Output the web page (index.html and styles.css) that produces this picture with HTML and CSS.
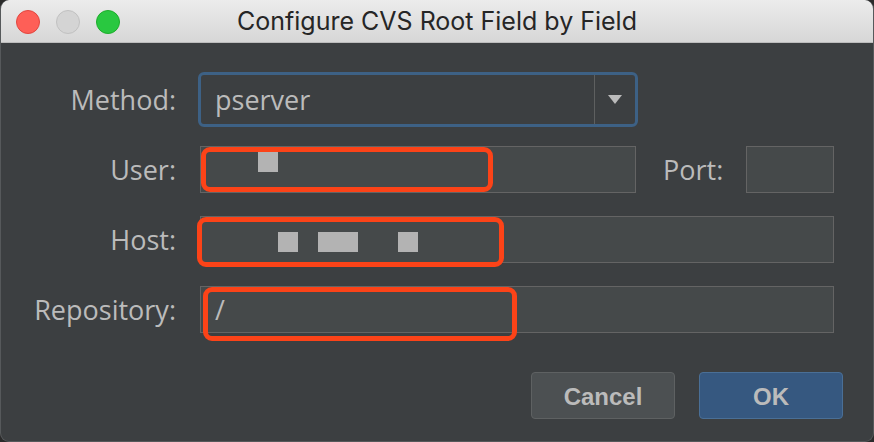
FILE: index.html
```html
<!DOCTYPE html>
<html lang="en">
<head>
<meta charset="utf-8">
<title>Configure CVS Root Field by Field</title>
<link rel="stylesheet" href="styles.css">
</head>
<body>
<div class="window">
  <header class="titlebar">
    <div class="lights">
      <span class="light light-close"></span>
      <span class="light light-min"></span>
      <span class="light light-max"></span>
    </div>
    <div class="title">Configure CVS Root Field by Field</div>
  </header>

  <main class="content">
    <div class="form">
      <label class="label">Method:</label>
      <div class="combo">
        <span class="combo-value">pserver</span>
        <span class="combo-arrow">
          <svg width="14" height="10" viewBox="0 0 14 10"><path d="M0 0 H14 L7 9 Z" fill="#bbbbbb"/></svg>
        </span>
      </div>

      <label class="label">User:</label>
      <div class="row-user">
        <div class="field field-user"><span class="mask mask-user"></span></div>
        <label class="label port-label">Port:</label>
        <div class="field field-port"></div>
      </div>

      <label class="label">Host:</label>
      <div class="field field-host">
        <span class="mask mask-h1"></span>
        <span class="mask mask-h2"></span>
        <span class="mask mask-h3"></span>
      </div>

      <label class="label">Repository:</label>
      <div class="field field-repo"><span class="field-text">/</span></div>
    </div>

    <div class="buttons">
      <button class="btn btn-cancel">Cancel</button>
      <button class="btn btn-ok">OK</button>
    </div>
  </main>

  <span class="annot annot-user"></span>
  <span class="annot annot-host"></span>
  <span class="annot annot-repo"></span>
</div>
</body>
</html>
```

FILE: styles.css
```css
html, body {
  margin: 0;
  padding: 0;
  background: #2b2b2b;
}

.window {
  position: relative;
  width: 874px;
  height: 442px;
  box-sizing: border-box;
  background: #3c3f41;
  border-radius: 9px;
  border: 1px solid #56595b;
  border-top: none;
  overflow: hidden;
  font-family: "Open Sans", "Noto Sans", sans-serif;
}

.titlebar {
  position: relative;
  height: 43px;
  box-sizing: border-box;
  background: linear-gradient(#ececec, #d7d7d7);
  border-bottom: 1px solid #bdbdbd;
  display: flex;
  align-items: center;
  justify-content: center;
}

.lights {
  position: absolute;
  left: 15px;
  top: 10px;
  display: flex;
  gap: 16px;
}

.light {
  width: 24px;
  height: 24px;
  box-sizing: border-box;
  border-radius: 50%;
  display: block;
}
.light-close { background: #fe5f57; border: 1px solid #e2463f; }
.light-min { background: #d4d4d4; border: 1px solid #c1c1c1; }
.light-max { background: #29c840; border: 1px solid #1dad2b; }

.title {
  font-family: "Inter", "Noto Sans", sans-serif;
  font-size: 25px;
  color: #262626;
}

.content {
  padding-top: 33px;
}

.form {
  display: grid;
  grid-template-columns: 175px 634px;
  grid-auto-rows: 47px;
  column-gap: 24px;
  row-gap: 23px;
}

.label {
  font-size: 27px;
  color: #bbbbbb;
  display: flex;
  align-items: center;
  justify-content: flex-end;
  white-space: nowrap;
}

.combo {
  margin: -4px 0 -4px -2px;
  width: 440px;
  height: 55px;
  box-sizing: border-box;
  border: 3px solid #3d6185;
  border-radius: 6px;
  display: flex;
  align-items: center;
  background: #3c3f41;
}
.combo-value {
  flex: 1;
  padding-left: 14px;
  font-size: 27px;
  color: #bbbbbb;
}
.combo-arrow {
  width: 40px;
  align-self: stretch;
  border-left: 1px solid #5e6060;
  display: flex;
  align-items: center;
  justify-content: center;
}

.field {
  box-sizing: border-box;
  height: 47px;
  background: #45494a;
  border: 1px solid #646464;
  display: flex;
  align-items: center;
}

.row-user {
  display: flex;
}
.field-user {
  width: 436px;
  align-items: flex-start;
  padding-top: 5px;
  padding-left: 57px;
}
.port-label {
  margin-left: 27px;
}
.field-port {
  width: 88px;
  margin-left: auto;
}

.field-host {
  align-items: flex-start;
  padding-top: 15px;
  padding-left: 77px;
}

.mask {
  display: block;
  height: 20px;
  width: 20px;
  background: #b3b3b3;
}
.mask-h2 { width: 40px; margin-left: 20px; }
.mask-h3 { margin-left: 40px; }

.field-text {
  padding-left: 14px;
  font-size: 27px;
  color: #bbbbbb;
}

.buttons {
  display: flex;
  justify-content: flex-end;
  gap: 24px;
  padding-right: 30px;
  margin-top: 39px;
}

.btn {
  width: 144px;
  height: 47px;
  box-sizing: border-box;
  border-radius: 4px;
  font-family: "Liberation Sans", Arial, sans-serif;
  font-weight: bold;
  font-size: 24px;
  color: #bbbbbb;
  padding: 2px 0 0;
}
.btn-cancel {
  background: #4c5052;
  border: 1px solid #5e6162;
}
.btn-ok {
  background: #365880;
  border: 1px solid #4a6f96;
}

.annot {
  position: absolute;
  box-sizing: border-box;
  border: 5px solid #fc4318;
  border-radius: 9px;
}
.annot-user { left: 200px; top: 147px; width: 292px; height: 45px; }
.annot-host { left: 196px; top: 217px; width: 307px; height: 50px; }
.annot-repo { left: 202px; top: 287px; width: 314px; height: 54px; }
```
